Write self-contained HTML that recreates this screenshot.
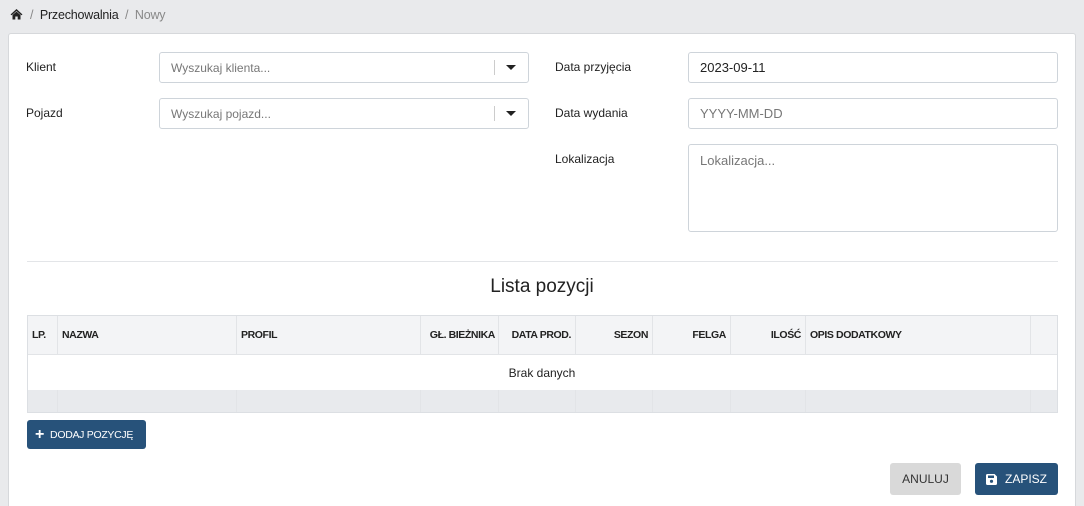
<!DOCTYPE html>
<html style="overflow:hidden;height:506px"><head><meta charset="utf-8"><style>
*{box-sizing:border-box;margin:0;padding:0}
body{width:1084px;height:506px;background:#e9eaec;font-family:"Liberation Sans",sans-serif;font-size:12px;color:#222;position:relative;overflow:hidden}
.a{position:absolute;white-space:nowrap}
.card{left:8px;top:33px;width:1068px;height:474px;background:#fff;border:1px solid #d6d8db;border-bottom:none;border-radius:3px 3px 0 0}
.lbl{font-size:12px;color:#222}
.inp{background:#fff;border:1px solid #ced4da;border-radius:3px;font-size:13px;color:#777;padding-left:11px;display:flex;align-items:center}
.th{position:absolute;top:315px;height:40px;display:flex;align-items:center;font-weight:bold;font-size:10.5px;letter-spacing:-0.4px;color:#222;padding:0 4px;white-space:nowrap}
.vl{position:absolute;width:1px;background:#e2e4e7}
</style></head><body>
<div class="a" style="left:10px;top:8px"><svg width="13" height="12" viewBox="0 0 13 12"><path d="M6.5 1 L12.5 6.5 L11.3 7.2 L6.5 3 L1.7 7.2 L0.5 6.5Z M2.5 7 L6.5 3.6 L10.5 7 V11.5 H7.7 V8.5 H5.3 V11.5 H2.5Z" fill="#222"/></svg></div>
<div class="a" style="left:30px;top:8px;font-size:12.5px;color:#888;letter-spacing:-0.2px">/ <span style="color:#222">&nbsp;Przechowalnia</span>&nbsp; / &nbsp;Nowy</div>
<div class="a card"></div>
<div class="a lbl" style="left:26px;top:60px">Klient</div>
<div class="a lbl" style="left:26px;top:106px">Pojazd</div>
<div class="a inp" style="left:159px;top:52px;width:370px;height:31px;font-size:12px">Wyszukaj klienta...</div>
<div class="a inp" style="left:159px;top:98px;width:370px;height:31px;font-size:12px">Wyszukaj pojazd...</div>
<div class="a" style="left:494px;top:60px;width:1px;height:15px;background:#ccc"></div>
<div class="a" style="left:494px;top:106px;width:1px;height:15px;background:#ccc"></div>
<div class="a" style="left:506px;top:65px;border-left:5px solid transparent;border-right:5px solid transparent;border-top:5px solid #222"></div>
<div class="a" style="left:506px;top:111px;border-left:5px solid transparent;border-right:5px solid transparent;border-top:5px solid #222"></div>
<div class="a lbl" style="left:555px;top:60px">Data przyjęcia</div>
<div class="a lbl" style="left:555px;top:106px">Data wydania</div>
<div class="a lbl" style="left:555px;top:152px">Lokalizacja</div>
<div class="a inp" style="left:688px;top:52px;width:370px;height:31px;color:#222">2023-09-11</div>
<div class="a inp" style="left:688px;top:98px;width:370px;height:31px">YYYY-MM-DD</div>
<div class="a inp" style="left:688px;top:144px;width:370px;height:88px;align-items:flex-start;padding-top:8px">Lokalizacja...</div>
<div class="a" style="left:27px;top:261px;width:1031px;height:1px;background:#e3e5e8"></div>
<div class="a" style="left:0;width:1084px;top:276px;text-align:center;font-size:19px;color:#222">Lista pozycji</div>
<div class="a" style="left:27px;top:315px;width:1031px;height:98px;border:1px solid #dcdfe3;background:#fff"></div>
<div class="a" style="left:28px;top:316px;width:1029px;height:39px;background:#f3f4f6;border-bottom:1px solid #e2e4e7"></div>
<div class="a" style="left:28px;top:390px;width:1029px;height:22px;background:#e8eaed"></div>
<div class="vl" style="left:57px;top:316px;height:39px"></div><div class="vl" style="left:57px;top:390px;height:22px"></div>
<div class="vl" style="left:236px;top:316px;height:39px"></div><div class="vl" style="left:236px;top:390px;height:22px"></div>
<div class="vl" style="left:420px;top:316px;height:39px"></div><div class="vl" style="left:420px;top:390px;height:22px"></div>
<div class="vl" style="left:498px;top:316px;height:39px"></div><div class="vl" style="left:498px;top:390px;height:22px"></div>
<div class="vl" style="left:575px;top:316px;height:39px"></div><div class="vl" style="left:575px;top:390px;height:22px"></div>
<div class="vl" style="left:652px;top:316px;height:39px"></div><div class="vl" style="left:652px;top:390px;height:22px"></div>
<div class="vl" style="left:730px;top:316px;height:39px"></div><div class="vl" style="left:730px;top:390px;height:22px"></div>
<div class="vl" style="left:805px;top:316px;height:39px"></div><div class="vl" style="left:805px;top:390px;height:22px"></div>
<div class="vl" style="left:1030px;top:316px;height:39px"></div><div class="vl" style="left:1030px;top:390px;height:22px"></div>
<div class="th" style="left:28px">LP.</div>
<div class="th" style="left:58px">NAZWA</div>
<div class="th" style="left:237px">PROFIL</div>
<div class="th" style="left:421px;width:77px;justify-content:flex-end;padding:0 3px">GŁ. BIEŻNIKA</div>
<div class="th" style="left:499px;width:76px;justify-content:flex-end">DATA PROD.</div>
<div class="th" style="left:576px;width:76px;justify-content:flex-end">SEZON</div>
<div class="th" style="left:653px;width:77px;justify-content:flex-end">FELGA</div>
<div class="th" style="left:731px;width:74px;justify-content:flex-end">ILOŚĆ</div>
<div class="th" style="left:806px">OPIS DODATKOWY</div>
<div class="a" style="left:0;width:1084px;top:366px;text-align:center;font-size:12px">Brak danych</div>
<div class="a" style="left:27px;top:420px;width:119px;height:29px;background:#27527a;border-radius:3px;color:#fff;font-size:10.5px;letter-spacing:-0.3px;display:flex;align-items:center;padding-left:8px"><span style="font-size:16px;font-weight:bold;margin-right:6px">+</span>DODAJ POZYCJĘ</div>
<div class="a" style="left:890px;top:463px;width:71px;height:32px;background:#d9d9d9;border-radius:3px;color:#333;font-size:12px;display:flex;align-items:center;justify-content:center">ANULUJ</div>
<div class="a" style="left:975px;top:463px;width:83px;height:32px;background:#27527a;border-radius:3px;color:#fff;font-size:12px;display:flex;align-items:center;justify-content:center"><svg width="11" height="11" viewBox="0 0 11 11" style="margin-right:8px"><path d="M0 1.5Q0 0 1.5 0H8.5L11 2.5V9.5Q11 11 9.5 11H1.5Q0 11 0 9.5Z" fill="#fff"/><rect x="2" y="1.5" width="6" height="2.5" fill="#27527a"/><circle cx="5.5" cy="7.3" r="1.6" fill="#27527a"/></svg>ZAPISZ</div>
</body></html>
